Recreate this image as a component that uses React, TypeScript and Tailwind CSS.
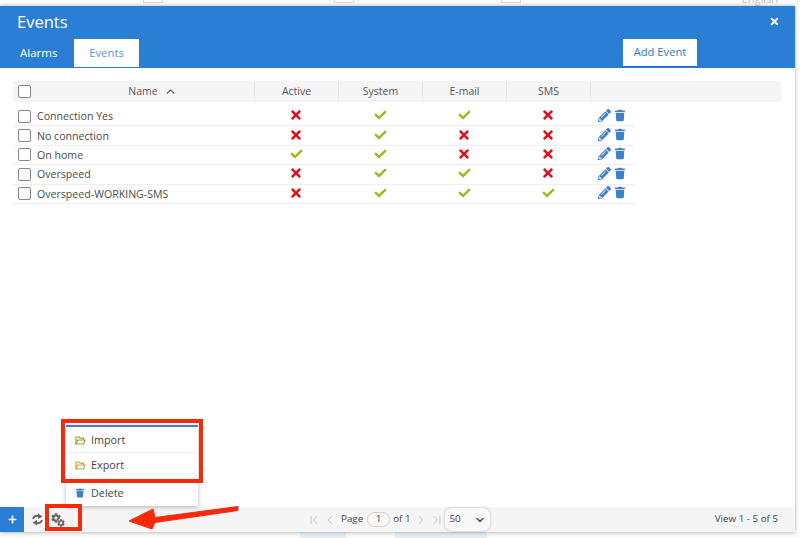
import { FaCheck, FaTimes, FaPencilAlt, FaTrash, FaCog, FaPlus } from "react-icons/fa";
import { ChevronUp, ChevronDown, ChevronLeft, ChevronRight, ChevronFirst, ChevronLast } from "lucide-react";

interface EventRow {
  name: string;
  active: boolean;
  system: boolean;
  email: boolean;
  sms: boolean;
}

const rows: EventRow[] = [
  { name: "Connection Yes", active: false, system: true, email: true, sms: false },
  { name: "No connection", active: false, system: true, email: false, sms: false },
  { name: "On home", active: true, system: true, email: false, sms: false },
  { name: "Overspeed", active: false, system: true, email: true, sms: false },
  { name: "Overspeed-WORKING-SMS", active: false, system: true, email: true, sms: true },
];

function Checkbox() {
  return <span className="block w-[13px] h-[13px] rounded-[2px] border-[1.5px] border-[#85858c] bg-white" />;
}

function Flag({ on }: { on: boolean }) {
  return (
    <div className="w-[84px] flex justify-center -translate-y-[1px]">
      {on ? <FaCheck className="w-[13px] h-[12px] text-[#9bbb1c]" /> : <FaTimes className="w-[14px] h-[14px] text-[#e2101a]" />}
    </div>
  );
}

function HeadCell({ label }: { label: string }) {
  return <div className="w-[84px] h-full flex items-center justify-center border-l border-[#e6e6e6]">{label}</div>;
}

function FolderIcon({ color }: { color: string }) {
  return (
    <svg width="11" height="9" viewBox="0 0 11 9" fill="none" stroke={color} strokeWidth="1.2">
      <path d="M1 8 V1 H4 L5 2.2 H8.5 V4" />
      <path d="M1 8 H8.5 L10 4 H2.8 L1 8 Z" />
    </svg>
  );
}

function RefreshIcon() {
  return (
    <svg className="ml-[8px]" width="11" height="13" viewBox="0 0 11 13" fill="none" stroke="#666" strokeWidth="2">
      <path d="M1.2 6 C1.2 3.5 3.5 2.5 7.5 3" />
      <path d="M9.8 7 C9.8 9.5 7.5 10.5 3.5 10" />
      <path d="M6 0.5 L10.5 3.5 L6 6 Z" fill="#666" stroke="none" />
      <path d="M5 7 L0.5 9.5 L5 12.5 Z" fill="#666" stroke="none" />
    </svg>
  );
}

export default function App() {
  return (
    <div className="relative w-[800px] h-[538px] overflow-hidden bg-white font-['Open_Sans',sans-serif] text-[10.6px] text-[#444]">
      {/* page behind the dialog */}
      <div className="absolute right-[22px] top-[-9px] text-[11px] text-[#c4c4c4]">English</div>
      <div className="absolute left-[143px] top-[-8px] w-[20px] h-[11px] border border-[#d5d5d5]" />
      <div className="absolute left-[334px] top-[-8px] w-[20px] h-[11px] border border-[#d5d5d5]" />
      <div className="absolute left-[501px] top-[-8px] w-[20px] h-[11px] border border-[#d5d5d5]" />
      <div className="absolute left-0 right-0 bottom-0 h-[6px] bg-[#f9f9f7]">
        <div className="absolute left-[300px] top-0 w-[46px] h-[6px] bg-[#e3eef2]" />
        <div className="absolute left-[395px] top-0 w-[92px] h-[6px] bg-[#e3eef2]" />
      </div>

      {/* dialog */}
      <div className="relative mt-[6px] w-[795px] h-[526px] flex flex-col bg-white shadow-[0_0_4px_rgba(0,0,0,0.35)]">
        <div className="h-[62px] bg-[#2a7fd5] flex flex-col text-white shrink-0">
          <div className="h-[33px] flex items-center justify-between pl-[17px] pr-[15px]">
            <span className="text-[16.5px] leading-none">Events</span>
            <FaTimes className="w-[11px] h-[11px] -translate-y-[1px]" />
          </div>
          <div className="flex items-end h-[28px]">
            <div className="w-[74px] h-full flex items-center pl-[20px] text-[11.5px]">Alarms</div>
            <div className="w-[65px] h-full flex items-center justify-center bg-white text-[#5b93d3] text-[11.3px]">Events</div>
            <div className="ml-[484px] w-[74px] h-full flex items-center justify-center bg-white text-[#2f77c4] text-[11.2px] border-b border-[#2a6db5]">Add Event</div>
          </div>
        </div>

        <div className="flex-1 pt-[13px] pl-[13px]">
          <div className="w-[768px] h-[21px] flex items-center bg-[#f5f5f5] text-[10.5px] text-[#555]">
            <div className="w-[22px] pl-[5px] shrink-0"><Checkbox /></div>
            <div className="w-[219px] flex items-center justify-center gap-[6px] pl-[16px]">
              <span>Name</span>
              <ChevronUp className="w-[13px] h-[13px]" strokeWidth={2} />
            </div>
            <HeadCell label="Active" />
            <HeadCell label="System" />
            <HeadCell label="E-mail" />
            <HeadCell label="SMS" />
            <div className="h-full border-l border-[#e6e6e6]" />
          </div>

          <div className="w-[622px] mt-[5px]">
            {rows.map((row) => (
              <div key={row.name} className="h-[19.4px] flex items-center border-b border-[#efefef] text-[#4a4a4a]">
                <div className="w-[24px] pl-[5px] shrink-0"><Checkbox /></div>
                <div className="w-[217px] text-[10.6px] pt-[2px]">{row.name}</div>
                <Flag on={row.active} />
                <Flag on={row.system} />
                <Flag on={row.email} />
                <Flag on={row.sms} />
                <div className="flex items-center gap-[4px] pl-[8px] text-[#3f80c8] -translate-y-[1px]">
                  <FaPencilAlt className="w-[13px] h-[13px]" />
                  <FaTrash className="w-[10px] h-[13px]" />
                </div>
              </div>
            ))}
          </div>
        </div>

        {/* footer pager */}
        <div className="h-[25px] bg-[#f5f5f5] flex items-center shrink-0 text-[9.8px] text-[#444]">
          <div className="w-[24px] h-full bg-[#2a7fd5] flex items-center justify-center text-white">
            <FaPlus className="w-[9px] h-[9px]" />
          </div>
          <RefreshIcon />
          <span className="relative ml-[8px] w-[14px] h-[14px] text-[#666]">
            <FaCog className="w-[10px] h-[10px]" />
            <FaCog className="absolute right-0 bottom-0 w-[8px] h-[8px] bg-[#f5f5f5] rounded-full" />
          </span>
          <div className="ml-[242px] flex items-center h-full">
            <ChevronFirst className="w-[14px] h-[14px] text-[#bbb]" strokeWidth={1.5} />
            <ChevronLeft className="ml-[2px] w-[14px] h-[14px] text-[#bbb]" strokeWidth={1.5} />
            <span className="ml-[4px]">Page</span>
            <span className="ml-[4px] w-[23px] h-[15px] rounded-full border border-[#d0d0d0] bg-[#f8f8f8] flex items-center justify-center">1</span>
            <span className="ml-[3px]">of 1</span>
            <ChevronRight className="ml-[3px] w-[14px] h-[14px] text-[#bbb]" strokeWidth={1.5} />
            <ChevronLast className="ml-[2px] w-[14px] h-[14px] text-[#bbb]" strokeWidth={1.5} />
            <div className="ml-[1px] w-[45px] h-[23px] flex items-center justify-between pl-[5px] pr-[4px] rounded-[7px] bg-[#f8f8f8] shadow-[0_0_3px_rgba(0,0,0,0.25)]">
              <span>50</span>
              <ChevronDown className="w-[12px] h-[12px]" strokeWidth={2.5} />
            </div>
          </div>
          <div className="ml-auto pr-[17px]">View 1 - 5 of 5</div>
        </div>
      </div>

      {/* open settings menu */}
      <div className="absolute left-[66px] top-[425px] w-[132px] bg-white border-t-2 border-[#3f7cc4] shadow-[0_1px_4px_rgba(0,0,0,0.3)] text-[10.8px] text-[#444]">
        <div className="h-[26px] flex items-center gap-[5px] pl-[9px] pt-[1px] border-b border-[#f0f0f0]">
          <FolderIcon color="#9a9f2c" />
          <span>Import</span>
        </div>
        <div className="h-[26px] flex items-center gap-[5px] pl-[9px] border-b border-[#f0f0f0]">
          <FolderIcon color="#d0a23c" />
          <span>Export</span>
        </div>
        <div className="h-[27px] flex items-center gap-[7px] pl-[10px] pt-[1px]">
          <FaTrash className="w-[8px] h-[10px] text-[#3f80c8]" />
          <span>Delete</span>
        </div>
      </div>

      {/* annotations */}
      <div className="absolute left-[61px] top-[419px] w-[142px] h-[64px] border-[4px] border-[#f52a0c]" />
      <div className="absolute left-[45px] top-[504px] w-[37px] h-[27px] border-[4px] border-[#f52a0c]" />
      <svg className="absolute left-[125px] top-[500px]" width="118" height="32" viewBox="0 0 118 32">
        <path d="M113 6.5 L30 17.5 L28 9 L4 21 L27 29 L30 22.5 L113 10.5 Z" fill="#f52a0c" stroke="#f52a0c" strokeWidth="1" />
      </svg>
    </div>
  );
}
